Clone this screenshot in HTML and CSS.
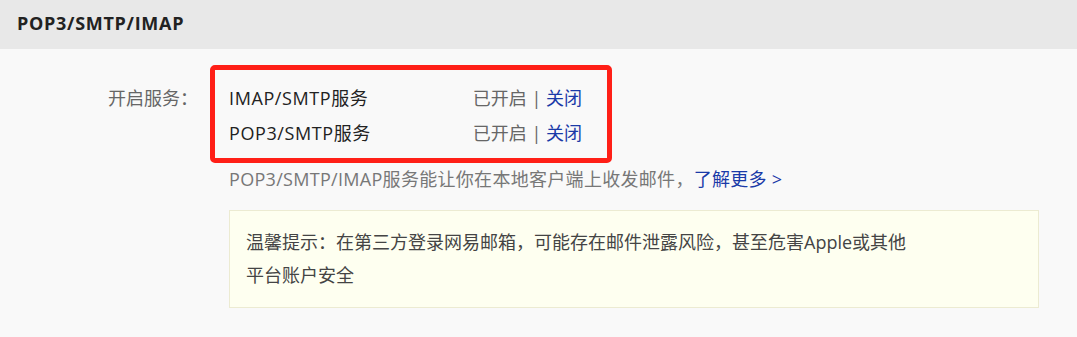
FILE: index.html
```html
<!DOCTYPE html>
<html lang="zh-CN">
<head>
<meta charset="utf-8">
<title>POP3/SMTP/IMAP</title>
<link rel="stylesheet" href="styles.css">
</head>
<body>
<div class="panel">
  <div class="panel-head">POP3/SMTP/IMAP</div>
  <div class="panel-body">
    <div class="label">开启服务：</div>
    <div class="main">
      <div class="services">
        <div class="svc-row">
          <span class="svc-name">IMAP/SMTP服务</span>
          <span class="svc-state">已开启 | <a class="link" href="#">关闭</a></span>
        </div>
        <div class="svc-row">
          <span class="svc-name">POP3/SMTP服务</span>
          <span class="svc-state">已开启 | <a class="link" href="#">关闭</a></span>
        </div>
        <div class="highlight"></div>
      </div>
      <p class="desc">POP3/SMTP/IMAP服务能让你在本地客户端上收发邮件，<a class="link" href="#">了解更多 &gt;</a></p>
      <div class="tip">温馨提示：在第三方登录网易邮箱，可能存在邮件泄露风险，甚至危害Apple或其他<br>平台账户安全</div>
    </div>
  </div>
</div>
</body>
</html>
```
FILE: styles.css
```css
html, body {
  margin: 0;
  padding: 0;
  background: #f9f9f9;
}
body {
  font-family: "Open Sans", "Noto Sans CJK SC", sans-serif;
  color: #333;
  font-size: 18px;
}
.panel-head {
  height: 49px;
  line-height: 47px;
  background: #e8e8e8;
  padding-left: 17px;
  font-weight: bold;
  font-size: 18px;
  letter-spacing: 0.7px;
  color: #222;
}
.panel-body {
  display: grid;
  grid-template-columns: 229px 810px;
  padding-top: 32px;
}
.label {
  padding-left: 108px;
  line-height: 35px;
  color: #666;
}
.services {
  position: relative;
  width: 353px;
}
.svc-row {
  display: flex;
  justify-content: space-between;
  line-height: 35px;
}
.svc-name {
  color: #222;
  letter-spacing: 0.6px;
}
.svc-state {
  color: #666;
}
.link {
  color: #1a3aa8;
  text-decoration: none;
}
.highlight {
  position: absolute;
  left: -19px;
  top: -16px;
  right: -30px;
  bottom: -12px;
  border: 5px solid #ff1f17;
  border-radius: 5px;
  pointer-events: none;
}
.desc {
  margin: 11px 0 0;
  line-height: 35px;
  color: #777;
  letter-spacing: 0.3px;
}
.tip {
  margin-top: 13px;
  background: #fefff0;
  border: 1px solid #ecebd2;
  padding: 15px 16px;
  line-height: 33px;
  font-size: 18px;
  color: #444;
}
```
